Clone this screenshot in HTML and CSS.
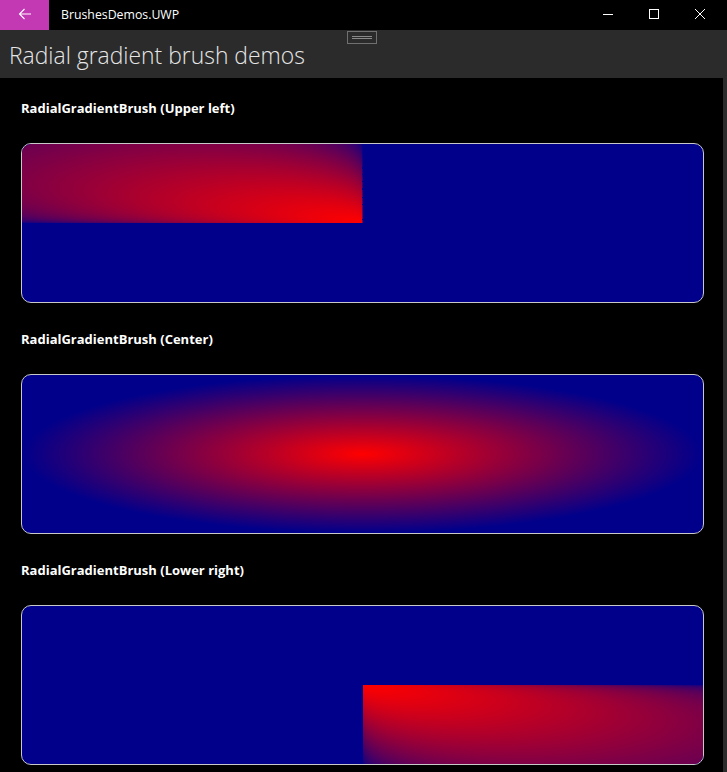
FILE: index.html
```html
<!DOCTYPE html>
<html>
<head>
<meta charset="utf-8">
<title>BrushesDemos.UWP</title>
<link rel="stylesheet" href="styles.css">
</head>
<body>
<div class="window">
  <div class="titlebar">
    <div class="back">
      <svg width="14" height="12" viewBox="0 0 14 12"><path d="M13 6H1.5M6.5 1L1.5 6l5 5" fill="none" stroke="#fff" stroke-width="1.1"/></svg>
    </div>
    <div class="apptitle">BrushesDemos.UWP</div>
    <div class="caption">
      <div class="cbtn"><svg width="10" height="10" viewBox="0 0 10 10"><path d="M0 5.5h10" stroke="#fff" stroke-width="1"/></svg></div>
      <div class="cbtn"><svg width="10" height="10" viewBox="0 0 10 10"><rect x="0.5" y="0.5" width="9" height="9" fill="none" stroke="#fff" stroke-width="1"/></svg></div>
      <div class="cbtn"><svg width="10" height="10" viewBox="0 0 10 10"><path d="M0 0L10 10M10 0L0 10" stroke="#fff" stroke-width="1"/></svg></div>
    </div>
  </div>
  <div class="main">
    <div class="page">
      <div class="header">
        <h1 class="pagetitle">Radial gradient brush demos</h1>
        <div class="dbg"><span class="dbgline"></span><span class="dbgline"></span></div>
      </div>
      <div class="content">
        <section class="demo">
          <div class="label">RadialGradientBrush (Upper left)</div>
          <div class="box">
            <svg class="quad q-ul" viewBox="0 0 1 1" preserveAspectRatio="none">
              <defs>
                <radialGradient id="gul" gradientUnits="userSpaceOnUse" fx="0" fy="0" fr="1" cx="1" cy="1" r="0.0001">
                  <stop offset="0" stop-color="#00008b"/>
                  <stop offset="1" stop-color="#ff0000"/>
                </radialGradient>
              </defs>
              <rect x="0" y="0" width="1" height="1" fill="url(#gul)"/>
            </svg>
          </div>
        </section>
        <section class="demo">
          <div class="label">RadialGradientBrush (Center)</div>
          <div class="box box-center"></div>
        </section>
        <section class="demo">
          <div class="label">RadialGradientBrush (Lower right)</div>
          <div class="box">
            <svg class="quad q-lr" viewBox="0 0 1 1" preserveAspectRatio="none">
              <defs>
                <radialGradient id="glr" gradientUnits="userSpaceOnUse" fx="1" fy="1" fr="1" cx="0" cy="0" r="0.0001">
                  <stop offset="0" stop-color="#00008b"/>
                  <stop offset="1" stop-color="#ff0000"/>
                </radialGradient>
              </defs>
              <rect x="0" y="0" width="1" height="1" fill="url(#glr)"/>
            </svg>
          </div>
        </section>
      </div>
    </div>
    <div class="scrollstrip"></div>
  </div>
</div>
</body>
</html>
```
FILE: styles.css
```css
html, body {
  margin: 0;
  padding: 0;
  background: #000;
}
body {
  font-family: "Open Sans", "Noto Sans", sans-serif;
  color: #fff;
  width: 727px;
  height: 772px;
  overflow: hidden;
}
.window {
  display: flex;
  flex-direction: column;
  height: 772px;
}
.titlebar {
  height: 30px;
  display: flex;
  align-items: center;
  background: #000;
  flex: none;
}
.back {
  width: 49px;
  height: 30px;
  background: #c239b3;
  display: flex;
  align-items: center;
  justify-content: center;
}
.back svg { margin-left: 1px; margin-top: -2px; }
.apptitle {
  margin-left: 12px;
  font-size: 12.3px;
  flex: 1;
  margin-top: -2px;
}
.caption {
  display: flex;
  height: 30px;
  margin-right: 4px;
}
.cbtn {
  width: 46px;
  height: 30px;
  display: flex;
  align-items: center;
  justify-content: center;
}
.cbtn svg { margin-top: -2px; }
.main {
  flex: 1;
  display: flex;
  min-height: 0;
}
.page {
  flex: 1;
  display: flex;
  flex-direction: column;
  min-width: 0;
}
.scrollstrip {
  width: 4px;
  background: #2b2b2b;
  flex: none;
}
.header {
  position: relative;
  height: 48px;
  background: #2b2b2b;
  display: flex;
  align-items: center;
  flex: none;
}
.pagetitle {
  margin: 0 0 0 9px;
  font-size: 22.9px;
  font-weight: 300;
  color: #e6e6e6;
  line-height: 30px;
  margin-top: 4px;
}
.dbg {
  position: absolute;
  left: 347px;
  top: 1px;
  width: 28px;
  height: 11px;
  border: 1px solid #707070;
  display: flex;
  flex-direction: column;
  align-items: center;
  justify-content: center;
  gap: 1px;
}
.dbgline {
  display: block;
  width: 20px;
  height: 1px;
  background: #8a8a8a;
}
.content {
  padding: 22px 19px 0 21px;
  display: flex;
  flex-direction: column;
  gap: 28px;
}
.demo {
  display: flex;
  flex-direction: column;
}
.label {
  font-size: 13px;
  font-weight: 700;
  line-height: 16px;
  margin-bottom: 27px;
}
.box {
  height: 158px;
  border: 1px solid #c8c8c8;
  border-radius: 10px;
  background: #00008b;
  overflow: hidden;
  display: grid;
  grid-template-columns: 1fr 1fr;
  grid-template-rows: 1fr 1fr;
}
.quad {
  display: block;
  width: 100%;
  height: 100%;
}
.q-ul { grid-column: 1; grid-row: 1; }
.q-lr { grid-column: 2; grid-row: 2; }
.box-center {
  background: radial-gradient(closest-side ellipse at 50% 50%, #ff0000 0%, #00008b 100%);
}
```
